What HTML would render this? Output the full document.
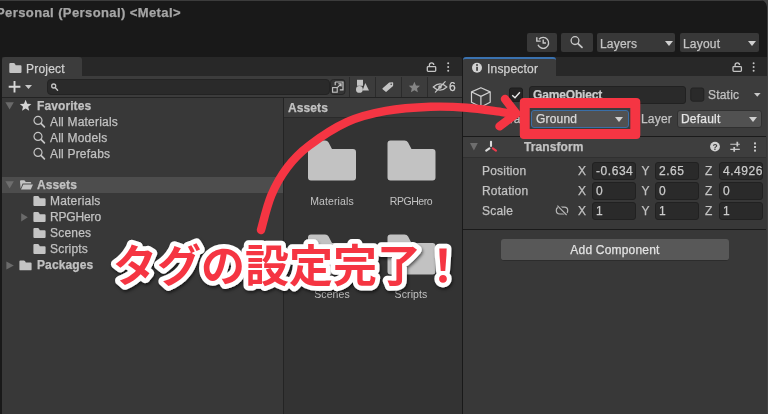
<!DOCTYPE html>
<html lang="ja">
<head>
<meta charset="utf-8">
<title>Unity - タグの設定完了</title>
<style>
*{box-sizing:border-box;margin:0;padding:0}
html,body{width:768px;height:414px;overflow:hidden;background:#424242}
body{position:relative;font-family:"Liberation Sans","Noto Sans CJK JP",sans-serif;font-size:12px;color:#c2c2c2;-webkit-font-smoothing:antialiased;-webkit-text-stroke:.25px currentColor}
.abs{position:absolute}
.t{position:absolute;white-space:nowrap;line-height:16px;height:16px;letter-spacing:.2px}
.sm{font-size:10.5px;letter-spacing:.1px;-webkit-text-stroke:0}
svg{position:absolute;overflow:visible}
.b{font-weight:bold;letter-spacing:.1px}
#win{will-change:transform;filter:blur(.35px);left:0;top:0;width:766.5px;height:414px;background:#191919;border-top-right-radius:7px;overflow:hidden}
#topline{left:0;top:0;width:767px;height:1px;background:#3c3c3c}
.tb{position:absolute;top:33px;height:19px;background:#383838;border-radius:2px}
.panelbar{background:#282828}
.tab{background:#3c3c3c;border-radius:3px 3px 0 0}
.fld{position:absolute;background:#2a2a2a;border:1px solid #212121;border-radius:3px;height:18px}
.fld span{position:absolute;left:3px;top:0;line-height:16px;color:#cbcbcb;letter-spacing:.55px;white-space:nowrap}
.dd{position:absolute;background:#515151;border:1px solid #303030;border-radius:3px;height:18px}
.arrow-d{position:absolute;width:0;height:0;border-left:4px solid transparent;border-right:4px solid transparent;border-top:5px solid #d0d0d0}
.sep{position:absolute;background:#1f1f1f}
</style>
</head>
<body>
<div id="win" class="abs">
  <div id="topline" class="abs"></div>
  <div class="t b" style="left:-4px;top:5px;font-size:13px;color:#a6a6a6;letter-spacing:.4px">Personal (Personal) &lt;Metal&gt;</div>

  <!-- top toolbar -->
  <div class="tb" style="left:527px;width:30px"></div>
  <div class="tb" style="left:561px;width:32px"></div>
  <div class="tb" style="left:597px;width:78px"><span class="t" style="left:3px;top:2.5px;color:#c4c4c4">Layers</span><i class="arrow-d" style="left:68px;top:8px"></i></div>
  <div class="tb" style="left:680px;width:79px"><span class="t" style="left:3px;top:2.5px;color:#c4c4c4">Layout</span><i class="arrow-d" style="left:68px;top:8px"></i></div>

  <!-- PROJECT PANEL -->
  <div class="abs panelbar" style="left:2px;top:57px;width:460px;height:19px;border-top-right-radius:2px"></div>
  <div class="abs tab" style="left:2px;top:57px;width:80px;height:19px"></div>
  <div class="t" style="left:26px;top:60.5px;color:#d0d0d0">Project</div>
  <div class="abs" style="left:2px;top:76px;width:460px;height:21px;background:#3c3c3c"></div>
  <div class="abs" style="left:47px;top:79px;width:283px;height:16px;background:#2a2a2a;border:1px solid #232323;border-radius:4px"></div>
  <div class="sep" style="left:2px;top:97px;width:460px;height:1px;background:#232323"></div>
  <!-- tree -->
  <div class="abs" style="left:2px;top:98px;width:281px;height:316px;background:#383838"></div>
  <div class="abs" style="left:2px;top:177px;width:281px;height:16px;background:#4d4d4d"></div>
  <div class="t b" style="left:37px;top:98px">Favorites</div>
  <div class="t" style="left:50px;top:114px">All Materials</div>
  <div class="t" style="left:50px;top:130px">All Models</div>
  <div class="t" style="left:50px;top:146px">All Prefabs</div>
  <div class="t b" style="left:37px;top:177px">Assets</div>
  <div class="t" style="left:50px;top:193px">Materials</div>
  <div class="t" style="left:50px;top:209px;letter-spacing:-.15px">RPGHero</div>
  <div class="t" style="left:50px;top:225px">Scenes</div>
  <div class="t" style="left:50px;top:241px">Scripts</div>
  <div class="t b" style="left:37px;top:257px">Packages</div>
  <!-- right pane -->
  <div class="sep" style="left:283px;top:98px;width:1px;height:316px;background:#242424"></div>
  <div class="abs" style="left:284px;top:98px;width:178px;height:316px;background:#333333"></div>
  <div class="abs" style="left:284px;top:98px;width:178px;height:20px;background:#3c3c3c;border-bottom:1px solid #2a2a2a"></div>
  <div class="t b" style="left:288px;top:100px">Assets</div>
  <div class="t sm" style="left:292px;top:193px;width:80px;text-align:center">Materials</div>
  <div class="t sm" style="left:371px;top:193px;width:80px;text-align:center;letter-spacing:-.45px">RPGHero</div>
  <div class="t sm" style="left:292px;top:286px;width:80px;text-align:center">Scenes</div>
  <div class="t sm" style="left:371px;top:286px;width:80px;text-align:center">Scripts</div>


  <!-- project icons -->
  <svg style="left:0;top:0" width="768" height="414" viewBox="0 0 768 414">
    <defs>
      <path id="sfold" d="M0,1 Q0,0 1,0 L4.4,0 Q5.2,0 5.6,0.7 L6.4,2.2 L11.2,2.2 Q12.2,2.2 12.2,3.2 L12.2,9 Q12.2,9.9 11.2,9.9 L1,9.9 Q0,9.9 0,9 Z"/>
      <g id="mag"><circle cx="4.4" cy="4.4" r="4" fill="none" stroke="#c4c4c4" stroke-width="1.2"/><path d="M7.6,7.6 L10.8,10.8" stroke="#c4c4c4" stroke-width="1.7" stroke-linecap="round"/></g>
      <path id="bfold" d="M0,3 Q0,0 3,0 L17,0 Q19.5,0 20.6,2 L24,8.5 L45,8.5 Q48,8.5 48,11.5 L48,37 Q48,40 45,40 L3,40 Q0,40 0,37 Z"/>
    </defs>
    <!-- tab folder -->
    <use href="#sfold" x="9.3" y="63" fill="#c4c4c4"/>
    <!-- plus + caret -->
    <path d="M14.5,81 V92.4 M8.7,86.7 H20.4" stroke="#d8d8d8" stroke-width="1.9" fill="none"/>
    <path d="M25,85 L32,85 L28.5,89 Z" fill="#c8c8c8"/>
    <!-- small search in field -->
    <circle cx="53.7" cy="86" r="2" fill="none" stroke="#c4c4c4" stroke-width="1.3"/><path d="M55.3,87.8 L57.6,90.2" stroke="#c4c4c4" stroke-width="1.4" stroke-linecap="round"/>
    <!-- search window button -->
    <rect x="330.5" y="79.5" width="14.5" height="15" rx="3" fill="#353535" stroke="#262626" stroke-width="1"/>
    <path d="M335.2,82 H343 V89.8 H339.8 M335.2,82 V85.2" fill="none" stroke="#c4c4c4" stroke-width="1.2"/>
    <rect x="332.6" y="87.6" width="4.6" height="4.6" fill="none" stroke="#c4c4c4" stroke-width="1.1"/>
    <path d="M337.3,87.6 L341,83.9 M338.3,83.8 H341.1 V86.6" fill="none" stroke="#c4c4c4" stroke-width="1.1"/>
    <!-- separators -->
    <path d="M349.5,77 V97 M375.5,77 V97 M401.5,77 V97 M427.5,77 V97" stroke="#2b2b2b" stroke-width="1"/>
    <!-- shapes icon -->
    <rect x="357" y="79.8" width="6" height="6" fill="#c4c4c4"/>
    <path d="M365.3,83 L369,90.5 L362.6,90.5 Z" fill="#c4c4c4"/>
    <circle cx="359.4" cy="89.4" r="3.4" fill="#c4c4c4"/>
    <!-- tag icon -->
    <path d="M382.6,88.3 L389.2,82.4 L392.6,82.2 Q393.2,82.2 393.2,82.9 L393.1,86 L386.4,91.7 Q385.9,92.1 385.4,91.6 L382.6,89.2 Q382.2,88.8 382.6,88.3 Z" fill="#c4c4c4"/>
    <circle cx="391.2" cy="84.2" r="0.8" fill="#3c3c3c"/>
    <!-- dim star -->
    <path id="st" d="M414.4,81.8 L416,85.4 L420,85.8 L417,88.4 L417.9,92.2 L414.4,90.2 L410.9,92.2 L411.8,88.4 L408.8,85.8 L412.8,85.4 Z" fill="#858585"/>
    <!-- eye-slash -->
    <path d="M433.3,87 Q440,80.6 446.8,87 Q440,93.4 433.3,87 Z" fill="none" stroke="#c4c4c4" stroke-width="1.2"/>
    <circle cx="440" cy="87" r="1.8" fill="#c4c4c4"/>
    <path d="M435.4,92.2 L445.2,81.6" stroke="#c4c4c4" stroke-width="1.2" stroke-linecap="round"/>
    <!-- lock -->
    <rect x="427.3" y="66.6" width="8.4" height="4.8" rx="0.8" fill="none" stroke="#c4c4c4" stroke-width="1.3"/>
    <path d="M429.4,66.4 V65 Q429.4,62.8 431.6,62.8 Q433.8,62.8 433.8,65" fill="none" stroke="#c4c4c4" stroke-width="1.3"/>
    <!-- kebab -->
    <circle cx="448.2" cy="63.3" r="1" fill="#c4c4c4"/><circle cx="448.2" cy="67" r="1" fill="#c4c4c4"/><circle cx="448.2" cy="70.7" r="1" fill="#c4c4c4"/>
    <!-- tree triangles -->
    <path d="M5.4,102.3 L13.8,102.3 L9.6,109.6 Z" fill="#6a6a6a"/>
    <path d="M5.4,181.3 L13.8,181.3 L9.6,188.6 Z" fill="#6e6e6e"/>
    <path d="M21.2,213.2 L21.2,221.4 L27.8,217.3 Z" fill="#6a6a6a"/>
    <path d="M6.4,261.4 L6.4,269.6 L13.8,265.5 Z" fill="#6a6a6a"/>
    <!-- favorites star -->
    <path d="M25.6,99.8 L27.2,103.7 L31.4,104 L28.2,106.7 L29.2,110.8 L25.6,108.6 L22,110.8 L23,106.7 L19.8,104 L24,103.7 Z" fill="#d6d6d6"/>
    <!-- magnifiers -->
    <use href="#mag" x="33.6" y="116"/>
    <use href="#mag" x="33.6" y="132"/>
    <use href="#mag" x="33.6" y="148"/>
    <!-- open folder (Assets) -->
    <path d="M20,181.3 Q20,180.3 21,180.3 L24.4,180.3 L25.8,182 L30.4,182 Q31.2,182 31.2,182.8 L31.2,183.6 L22.6,183.6 L20.6,188.6 Z" fill="#c4c4c4"/>
    <path d="M23.3,184.6 L33,184.6 L30.8,189.5 L21,189.5 Z" fill="#c4c4c4"/>
    <!-- small folders -->
    <use href="#sfold" x="33.4" y="196" fill="#c4c4c4"/>
    <use href="#sfold" x="33.4" y="212" fill="#c4c4c4"/>
    <use href="#sfold" x="33.4" y="228" fill="#c4c4c4"/>
    <use href="#sfold" x="33.4" y="244" fill="#c4c4c4"/>
    <use href="#sfold" x="19.4" y="260.4" fill="#c4c4c4"/>
    <!-- big folders -->
    <use href="#bfold" x="308" y="140.5" fill="#c2c2c2"/>
    <use href="#bfold" x="387.5" y="140.5" fill="#c2c2c2"/>
    <use href="#bfold" x="308" y="234.5" fill="#c2c2c2"/>
    <use href="#bfold" x="387.5" y="234.5" fill="#c2c2c2"/>
  </svg>
  <div class="t" style="left:449px;top:79px;color:#d0d0d0;letter-spacing:0">6</div>

  <!-- INSPECTOR PANEL -->
  <div class="abs panelbar" style="left:463px;top:57px;width:304px;height:19px;border-top-left-radius:3px"></div>
  <div class="abs tab" style="left:463px;top:57px;width:93px;height:19px;border-top:2px solid #3a72b0"></div>
  <div class="t" style="left:487px;top:60.5px;color:#d0d0d0">Inspector</div>
  <div class="abs" style="left:463px;top:76px;width:304px;height:338px;background:#383838"></div>
  <div class="abs" style="left:463px;top:76px;width:304px;height:60px;background:#3c3c3c"></div>
  <div class="fld" style="left:529px;top:86px;width:157px"><span class="b" style="left:3px;letter-spacing:-.15px">GameObject</span></div>
  <div class="t" style="left:708px;top:87px">Static</div>
  <div class="dd" style="left:531px;top:110px;width:98px;border-color:#3a6fa8"><span class="t" style="left:4px;top:0;color:#dadada">Ground</span><i class="arrow-d" style="left:83px;top:6px"></i></div>
  <div class="t" style="left:507.5px;top:111px">Tag</div>
  <div class="t" style="left:641px;top:111px">Layer</div>
  <div class="dd" style="left:677px;top:110px;width:85px"><span class="t" style="left:3px;top:0;color:#e4e4e4">Default</span><i class="arrow-d" style="left:71px;top:6px"></i></div>
  <div class="sep" style="left:463px;top:136px;width:303px;height:1px;background:#1a1a1a"></div>
  <div class="abs" style="left:463px;top:137px;width:303px;height:20px;background:#3e3e3e"></div>
  <div class="sep" style="left:463px;top:157px;width:303px;height:1px;background:#303030"></div>
  <div class="t b" style="left:524px;top:139px">Transform</div>
  <div class="t" style="left:482px;top:163px">Position</div>
  <div class="t" style="left:482px;top:183px">Rotation</div>
  <div class="t" style="left:482px;top:203px">Scale</div>
  <div class="t" style="left:578px;top:163px">X</div><div class="fld" style="left:592px;top:162px;width:44px"><span>-0.634</span></div>
  <div class="t" style="left:641.5px;top:163px">Y</div><div class="fld" style="left:655px;top:162px;width:44px"><span>2.65</span></div>
  <div class="t" style="left:705px;top:163px">Z</div><div class="fld" style="left:719px;top:162px;width:44px"><span>4.4926</span></div>
  <div class="t" style="left:578px;top:183px">X</div><div class="fld" style="left:592px;top:182px;width:44px"><span>0</span></div>
  <div class="t" style="left:641.5px;top:183px">Y</div><div class="fld" style="left:655px;top:182px;width:44px"><span>0</span></div>
  <div class="t" style="left:705px;top:183px">Z</div><div class="fld" style="left:719px;top:182px;width:44px"><span>0</span></div>
  <div class="t" style="left:578px;top:203px">X</div><div class="fld" style="left:592px;top:202px;width:44px"><span>1</span></div>
  <div class="t" style="left:641.5px;top:203px">Y</div><div class="fld" style="left:655px;top:202px;width:44px"><span>1</span></div>
  <div class="t" style="left:705px;top:203px">Z</div><div class="fld" style="left:719px;top:202px;width:44px"><span>1</span></div>

  <!-- inspector icons -->
  <svg style="left:0;top:0" width="768" height="414" viewBox="0 0 768 414">
    <!-- info icon -->
    <circle cx="477" cy="67.8" r="5" fill="#d2d2d2"/>
    <rect x="476.2" y="66.8" width="1.7" height="4" fill="#3c3c3c"/><circle cx="477" cy="65" r="1" fill="#3c3c3c"/>
    <!-- lock + kebab -->
    <rect x="733" y="66.6" width="8.4" height="4.8" rx="0.8" fill="none" stroke="#c4c4c4" stroke-width="1.3"/>
    <path d="M735.1,66.4 V65 Q735.1,62.8 737.3,62.8 Q739.5,62.8 739.5,65" fill="none" stroke="#c4c4c4" stroke-width="1.3"/>
    <circle cx="753.6" cy="63.3" r="1" fill="#c4c4c4"/><circle cx="753.6" cy="67" r="1" fill="#c4c4c4"/><circle cx="753.6" cy="70.7" r="1" fill="#c4c4c4"/>
    <!-- cube -->
    <path d="M480.9,87.7 L490.2,91.9 L490.2,102.3 L480.9,107 L471.5,102.3 L471.5,91.9 Z M471.7,92 L480.9,96.4 L490,92 M480.9,96.4 V106.8" fill="none" stroke="#d0d0d0" stroke-width="1.2" stroke-linejoin="round"/>
    <!-- checkbox checked -->
    <rect x="509.5" y="88" width="13" height="13.4" rx="2" fill="#242424" stroke="#1c1c1c" stroke-width="1"/>
    <path d="M512.2,95.2 L515,97.7 L519.9,92.2" fill="none" stroke="#eaeaea" stroke-width="1.4"/>
    <!-- static checkbox -->
    <rect x="690.8" y="88" width="13" height="13.2" rx="2" fill="#2a2a2a" stroke="#222" stroke-width="1"/>
    <path d="M754,93 L760.6,93 L757.3,96.8 Z" fill="#c8c8c8"/>
    <!-- transform header -->
    <path d="M470,143 L477.8,143 L473.9,150.6 Z" fill="#6e6e6e"/>
    <path d="M491,141.8 V146" stroke="#dcdcdc" stroke-width="2.1" stroke-linecap="round"/>
    <path d="M489.4,148.4 L486.2,150.7" stroke="#dcdcdc" stroke-width="2.1" stroke-linecap="round"/>
    <path d="M492.8,148.4 L496,150.7" stroke="#ee3b4c" stroke-width="2.1" stroke-linecap="round"/>
    <circle cx="715" cy="146.6" r="4.9" fill="#d0d0d0"/>
    <text x="715" y="149.6" text-anchor="middle" font-family="'Liberation Sans',sans-serif" font-weight="bold" font-size="8.5" fill="#3e3e3e">?</text>
    <path d="M730.3,144.3 H739.8 M730.3,149.4 H739.8" stroke="#c8c8c8" stroke-width="1.1"/>
    <path d="M737.3,141.8 V146.6 M734.2,147 V151.8" stroke="#c8c8c8" stroke-width="1.7"/>
    <rect x="754" y="142.4" width="2" height="2" fill="#c4c4c4"/><rect x="754" y="146" width="2" height="2" fill="#c4c4c4"/><rect x="754" y="149.6" width="2" height="2" fill="#c4c4c4"/>
    <!-- link icon -->
    <rect x="556.3" y="207.2" width="11.4" height="6.8" rx="3.4" fill="none" stroke="#b8b8b8" stroke-width="1.2"/>
    <path d="M558.2,205.8 L567,215" stroke="#383838" stroke-width="3"/>
    <path d="M557.4,205.6 L566.6,215" stroke="#b8b8b8" stroke-width="1.1"/>
    <!-- top toolbar icons -->
    <g transform="translate(0.8,0.2)"><path d="M538.2,39 A5.5,5.5 0 1 1 537.2,44.6" fill="none" stroke="#c8c8c8" stroke-width="1.4"/>
    <path d="M536,37 V40.9 H539.9" fill="none" stroke="#c8c8c8" stroke-width="1.4"/>
    <path d="M542.4,39.2 V42.8 H545.2" fill="none" stroke="#c8c8c8" stroke-width="1.4"/></g>
    <circle cx="575" cy="40.6" r="3.9" fill="none" stroke="#c8c8c8" stroke-width="1.3"/>
    <path d="M578,43.6 L582,47.4" stroke="#c8c8c8" stroke-width="1.7" stroke-linecap="round"/>
  </svg>
  <div class="sep" style="left:463px;top:229px;width:303px;height:1px;background:#1a1a1a"></div>
  <div class="abs" style="left:501px;top:239px;width:228px;height:22px;background:#585858;border-radius:3px;border-bottom:1px solid #2c2c2c"></div>
  <div class="t" style="left:501px;top:242px;width:228px;text-align:center;color:#e2e2e2">Add Component</div>
</div>

<!-- annotation overlay -->
<svg class="abs" style="left:0;top:0" width="768" height="414" viewBox="0 0 768 414">
  <defs><filter id="ds" x="-5%" y="-20%" width="110%" height="150%"><feDropShadow dx="1" dy="2" stdDeviation="1.8" flood-color="#000" flood-opacity="0.55"/></filter></defs>
  <path d="M261,230 C262.7,224.2 267.0,205.6 271.4,195.2 C275.8,184.8 281.2,175.5 287.4,167.3 C293.6,159.1 298.6,153.6 308.6,146 C318.6,138.4 334.4,127.8 347.3,121.9 C360.2,116.1 372.0,113.4 385.9,110.9 C399.8,108.4 417.0,107.3 430.5,106.8 C444.0,106.3 454.8,106.8 466.9,107.7 C479.0,108.6 495.2,111.3 503.4,112.3 C511.6,113.3 513.9,113.5 516,113.7" fill="none" stroke="#f53543" stroke-width="8.4" stroke-linecap="round"/>
  <path d="M505,99 L516.3,113.7 L499.5,126.3" fill="none" stroke="#f53543" stroke-width="8.5" stroke-linecap="round" stroke-linejoin="round"/>
  <path d="M523.8,98.1 H636.3 Q640.3,98.1 640.3,102.1 V135 Q640.3,139 636.3,139 H523.8 Q519.8,139 519.8,135 V102.1 Q519.8,98.1 523.8,98.1 Z M529.7,108.1 V128.9 H630.3 V108.1 Z" fill="#f53543" fill-rule="evenodd"/>
  <text id="jp" x="112.9" y="281.5" font-family="'Liberation Sans','Noto Sans CJK JP',sans-serif" font-weight="700" font-size="44" fill="#f53543" stroke="#fff" stroke-width="9.5" filter="url(#ds)" stroke-linejoin="round" paint-order="stroke">タグの設定完了！</text>
</svg>
</body>
</html>
